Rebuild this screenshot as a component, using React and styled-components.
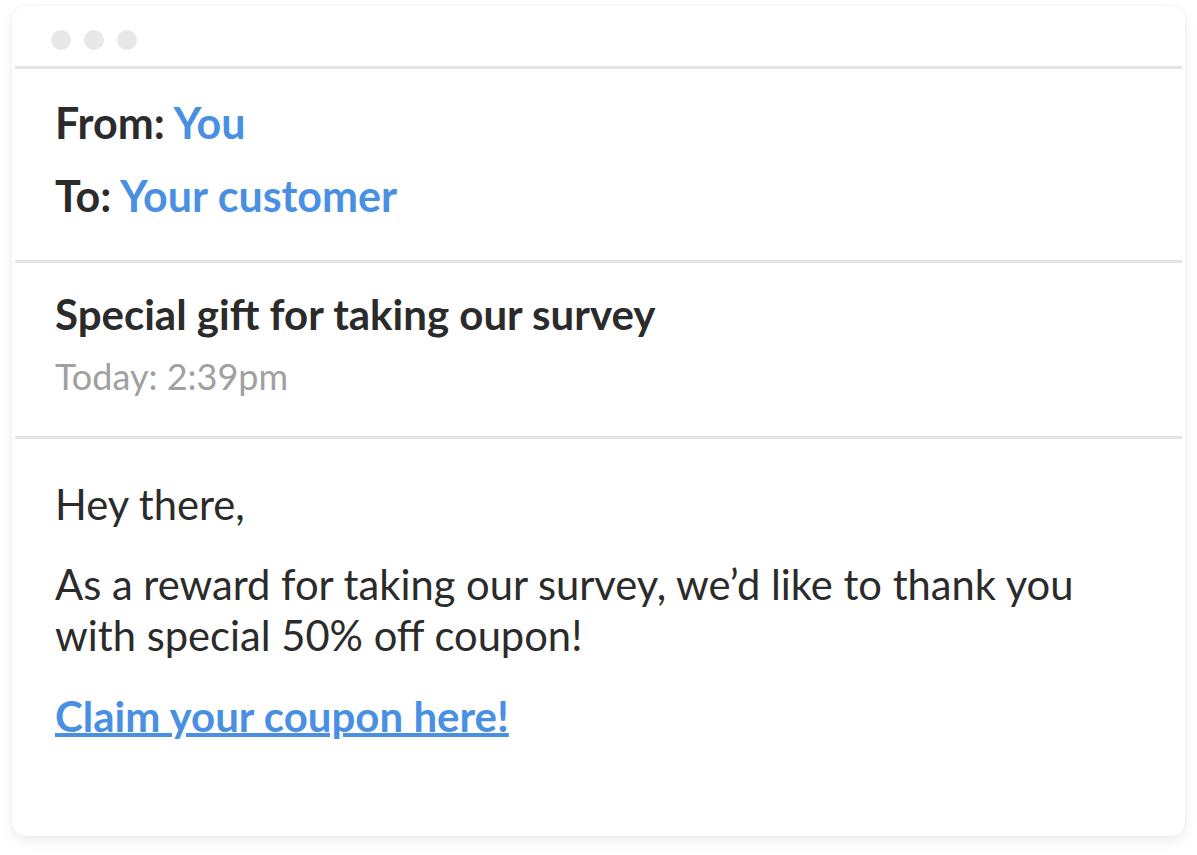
import React from 'react';
import styled, { createGlobalStyle } from 'styled-components';

const GlobalStyle = createGlobalStyle`
  html, body {
    margin: 0;
    padding: 0;
    background: #ffffff;
  }
  body {
    font-family: Lato, "Open Sans", "Liberation Sans", sans-serif;
    color: #2b2b2b;
  }
`;

const Page = styled.div`
  padding: 6px 12px 19px;
`;

const Window = styled.div`
  width: 1173px;
  height: 830px;
  box-sizing: border-box;
  background: #ffffff;
  border-radius: 14px;
  box-shadow: 0 0 3px rgba(0, 0, 0, 0.06), 0 5px 14px rgba(0, 0, 0, 0.07);
  display: flex;
  flex-direction: column;
  overflow: hidden;
`;

const TitleBar = styled.div`
  height: 60px;
  display: flex;
  align-items: center;
  gap: 13px;
  padding-left: 39px;
  padding-top: 8px;
  box-sizing: border-box;
`;

const Dot = styled.span`
  width: 20px;
  height: 20px;
  border-radius: 50%;
  background: #e8e8e8;
`;

const Divider = styled.hr`
  border: 0;
  height: 3px;
  margin: 0 3px;
  background: #e4e4e4;
  flex-shrink: 0;
`;

const Section = styled.section`
  padding: ${(p) => p.$pad};
  display: flex;
  flex-direction: column;
`;

const Line = styled.div`
  font-size: ${(p) => p.$size || '42px'};
  font-weight: ${(p) => p.$weight || 400};
  line-height: ${(p) => p.$lh || '52px'};
  color: ${(p) => p.$color || '#2b2b2b'};
  margin: ${(p) => p.$mt || '0px'} 0 0;
`;

const Accent = styled.span`
  color: #4a90e2;
`;

const CouponLink = styled.a`
  color: #4a90e2;
  font-weight: 700;
  text-decoration: underline;
  text-decoration-thickness: 4px;
  text-underline-offset: 1px;
  cursor: pointer;
`;

export default function App() {
  return (
    <>
      <GlobalStyle />
      <Page>
        <Window>
          <TitleBar>
            <Dot />
            <Dot />
            <Dot />
          </TitleBar>
          <Divider />
          <Section $pad="28px 43px 38px">
            <Line $size="43px" $weight={700}>
              From: <Accent>You</Accent>
            </Line>
            <Line $size="43px" $weight={700} $mt="21px">
              To: <Accent>Your customer</Accent>
            </Line>
          </Section>
          <Divider />
          <Section $pad="25px 43px 38px">
            <Line $weight={700}>Special gift for taking our survey</Line>
            <Line $size="36px" $lh="44px" $color="#a0a0a0" $mt="14px">
              Today: 2:39pm
            </Line>
          </Section>
          <Divider />
          <Section $pad="40px 43px 0">
            <Line $size="41.7px" $lh="51px">Hey there,</Line>
            <Line $size="41.7px" $lh="51px" $mt="29px">
              As a reward for taking our survey, we’d like to thank you
              <br />
              with special 50% off coupon!
            </Line>
            <Line $lh="51px" $mt="30px">
              <CouponLink>Claim your coupon here!</CouponLink>
            </Line>
          </Section>
        </Window>
      </Page>
    </>
  );
}
